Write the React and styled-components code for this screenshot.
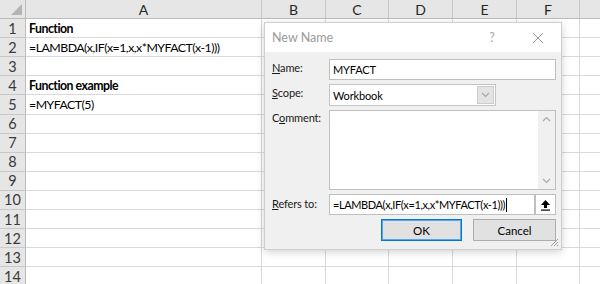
import React from "react";
import styled, { createGlobalStyle } from "styled-components";

const GlobalStyle = createGlobalStyle`
  html, body {
    margin: 0;
    padding: 0;
    background: #ffffff;
    overflow: hidden;
  }
  * { box-sizing: border-box; }
`;

const colWidths = [26, 236, 64, 63, 64, 64, 63, 40];
const colNames = ["", "A", "B", "C", "D", "E", "F", ""];

const cells = {
  1: { text: "Function", bold: true },
  2: { text: "=LAMBDA(x,IF(x=1,x,x*MYFACT(x-1)))" },
  4: { text: "Function example", bold: true },
  5: { text: "=MYFACT(5)" }
};

const Page = styled.div`
  position: relative;
  width: 600px;
  height: 284px;
  overflow: hidden;
  font-family: Lato, "Open Sans", sans-serif;
`;

const Sheet = styled.div`
  display: grid;
  grid-template-columns: ${colWidths.map(w => w + "px").join(" ")};
  grid-auto-rows: 19.1px;
`;

const Corner = styled.div`
  position: relative;
  background: #e6e6e6;
  border-right: 1px solid #bcbcbc;
  border-bottom: 1px solid #bcbcbc;
  &::after {
    content: "";
    position: absolute;
    right: 3px;
    bottom: 3px;
    border-left: 11px solid transparent;
    border-bottom: 11px solid #b4b4b4;
  }
`;

const ColHead = styled.div`
  background: #e6e6e6;
  border-right: 1px solid #c8c8c8;
  border-bottom: 1px solid #bcbcbc;
  display: flex;
  align-items: center;
  justify-content: center;
  font-size: 14px;
  color: #262626;
`;

const RowHead = styled.div`
  background: #e6e6e6;
  border-right: 1px solid #bcbcbc;
  border-bottom: 1px solid #c8c8c8;
  display: flex;
  align-items: center;
  justify-content: center;
  font-size: 14.5px;
  color: #3a3a3a;
`;

const Cell = styled.div`
  border-right: 1px solid #d9d9d9;
  border-bottom: 1px solid #d9d9d9;
  display: flex;
  align-items: center;
  padding-left: 3px;
  font-size: 12.3px;
  letter-spacing: -0.5px;
  font-weight: ${p => (p.$bold ? 700 : 400)};
  color: #000;
  white-space: nowrap;
  overflow: visible;
`;

const Dialog = styled.div`
  position: absolute;
  left: 264px;
  top: 22px;
  width: 298px;
  height: 228px;
  background: #f0f0f0;
  border: 1px solid #cfcfcf;
  box-shadow: 0 2px 8px rgba(0, 0, 0, 0.18);
  font-family: Lato, "Open Sans", sans-serif;
  font-size: 11px;
  letter-spacing: -0.15px;
  color: #000;
  display: flex;
  flex-direction: column;
`;

const TitleBar = styled.div`
  height: 29px;
  background: #ffffff;
  display: flex;
  align-items: center;
  padding-left: 7px;
  color: #9a9a9a;
  font-size: 12.5px;
  letter-spacing: 0;
`;

const TitleText = styled.span`
  flex: 1;
`;

const TitleButton = styled.span`
  width: 46px;
  display: flex;
  justify-content: center;
  align-items: center;
  color: #a8a8a8;
`;

const Body = styled.div`
  flex: 1;
  position: relative;
  display: grid;
  grid-template-columns: 57px 227px;
  grid-template-rows: 21px 22px 80px 21px 22px;
  row-gap: 4px;
  padding: 7px 6px 0 7px;
`;

const Label = styled.label`
  padding-top: ${p => p.$top || 2}px;
  color: #1a1a1a;
  u { text-decoration: underline; }
`;

const TextBox = styled.div`
  background: #fff;
  border: 1px solid #bfbfbf;
  display: flex;
  align-items: center;
  padding-left: 3px;
  white-space: nowrap;
`;

const SelectBox = styled(TextBox)`
  width: 167px;
  justify-content: space-between;
  padding-right: 1px;
  border-color: #c4c4c4;
`;

const DropButton = styled.span`
  width: 17px;
  height: 18px;
  background: #e3e3e3;
  border: 1px solid #cdcdcd;
  display: flex;
  align-items: center;
  justify-content: center;
`;

const TextArea = styled.div`
  background: #fff;
  border: 1px solid #bfbfbf;
  display: flex;
  justify-content: flex-end;
`;

const ScrollBar = styled.div`
  width: 17px;
  background: #f0f0f0;
  display: flex;
  flex-direction: column;
  justify-content: space-between;
  align-items: center;
  padding: 5px 0;
`;

const RefersRow = styled.div`
  display: flex;
`;

const RefersInput = styled(TextBox)`
  flex: 1;
  letter-spacing: -0.4px;
`;

const Caret = styled.span`
  display: inline-block;
  width: 1px;
  height: 14px;
  background: #000;
  margin-left: 1px;
`;

const CollapseButton = styled.span`
  width: 21px;
  background: #fff;
  border: 1px solid #bfbfbf;
  border-left: none;
  display: flex;
  align-items: center;
  justify-content: center;
  box-shadow: inset 1px 0 0 #bfbfbf;
`;

const ButtonRow = styled.div`
  grid-column: 1 / 3;
  display: flex;
  justify-content: flex-end;
  gap: 11px;
`;

const Button = styled.button`
  width: ${p => p.$width}px;
  height: 22px;
  font-family: inherit;
  font-size: 11.5px;
  color: #000;
  background: #e1e1e1;
  border: 1px solid ${p => (p.$primary ? "#0078d7" : "#adadad")};
  box-shadow: ${p => (p.$primary ? "inset 0 0 0 1px #5aa5e6" : "none")};
  padding: 0;
`;

const Grip = styled.svg`
  position: absolute;
  right: 2px;
  bottom: 2px;
`;

const Chevron = ({ up }) => (
  <svg width="9" height="6" viewBox="0 0 9 6">
    <path
      d={up ? "M1 5 L4.5 1.5 L8 5" : "M1 1 L4.5 4.5 L8 1"}
      fill="none"
      stroke="#a8a8a8"
      strokeWidth="1.2"
    />
  </svg>
);

const App = () => {
  const rows = Array.from({ length: 14 }, (_, i) => i + 1);
  return (
    <Page>
      <GlobalStyle />
      <Sheet>
        {colNames.map((c, i) =>
          i === 0 ? <Corner key="corner" /> : <ColHead key={i}>{c}</ColHead>
        )}
        {rows.map(r => (
          <React.Fragment key={r}>
            <RowHead>{r}</RowHead>
            {colNames.slice(1).map((c, ci) => (
              <Cell key={ci} $bold={ci === 0 && cells[r] && cells[r].bold}>
                {ci === 0 && cells[r] ? cells[r].text : ""}
              </Cell>
            ))}
          </React.Fragment>
        ))}
      </Sheet>

      <Dialog>
        <TitleBar>
          <TitleText>New Name</TitleText>
          <TitleButton>?</TitleButton>
          <TitleButton>
            <svg width="12" height="12" viewBox="0 0 12 12">
              <path d="M1 1 L11 11 M11 1 L1 11" stroke="#9a9a9a" strokeWidth="1" />
            </svg>
          </TitleButton>
        </TitleBar>
        <Body>
          <Label>
            <u>N</u>ame:
          </Label>
          <TextBox>MYFACT</TextBox>

          <Label>
            <u>S</u>cope:
          </Label>
          <SelectBox>
            Workbook
            <DropButton>
              <Chevron />
            </DropButton>
          </SelectBox>

          <Label $top={1}>
            C<u>o</u>mment:
          </Label>
          <TextArea>
            <ScrollBar>
              <Chevron up />
              <Chevron />
            </ScrollBar>
          </TextArea>

          <Label $top={3}>
            <u>R</u>efers to:
          </Label>
          <RefersRow>
            <RefersInput>
              =LAMBDA(x,IF(x=1,x,x*MYFACT(x-1)))
              <Caret />
            </RefersInput>
            <CollapseButton>
              <svg width="11" height="12" viewBox="0 0 11 12">
                <path d="M5.5 1 L10 6 L7 6 L7 9 L4 9 L4 6 L1 6 Z" fill="#000" />
                <rect x="1" y="10.5" width="9" height="1.2" fill="#000" />
              </svg>
            </CollapseButton>
          </RefersRow>

          <ButtonRow>
            <Button $primary $width={81}>
              OK
            </Button>
            <Button $width={83}>Cancel</Button>
          </ButtonRow>

          <Grip width="10" height="10" viewBox="0 0 10 10">
            <path d="M9 2 L2 9 M9 5 L5 9 M9 8 L8 9" stroke="#a0a0a0" strokeWidth="1" />
          </Grip>
        </Body>
      </Dialog>
    </Page>
  );
};

export default App;
